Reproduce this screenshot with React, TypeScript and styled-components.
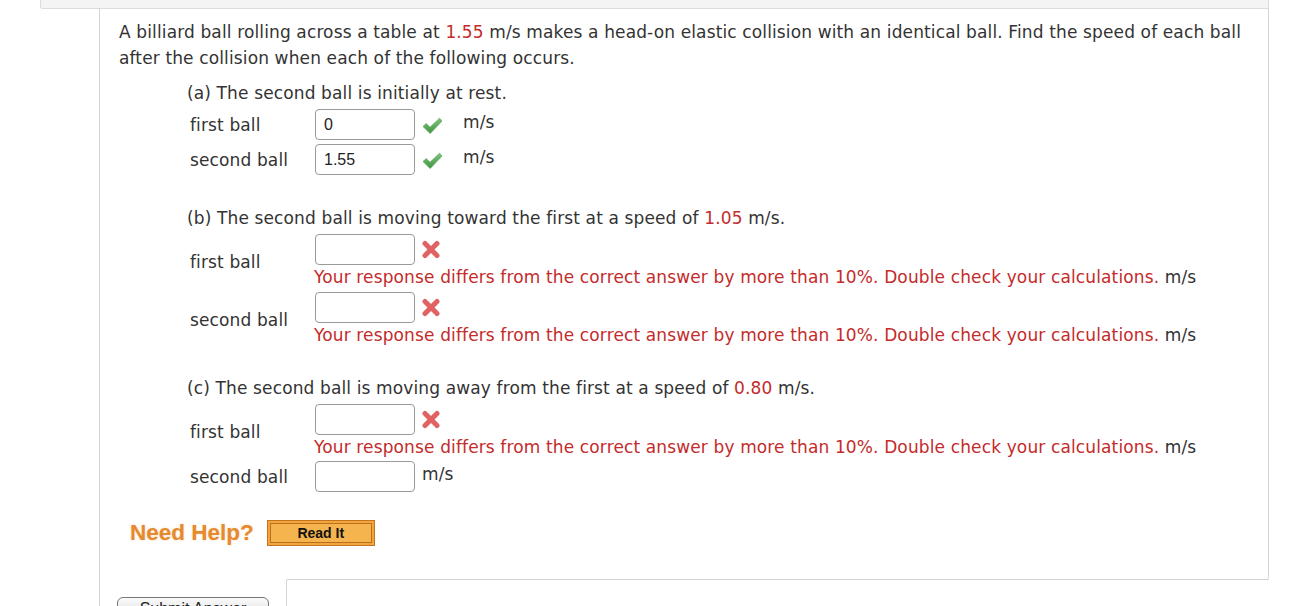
import React from "react";
import styled, { createGlobalStyle } from "styled-components";

const Global = createGlobalStyle`
  html, body { margin: 0; padding: 0; background: #fff; }
  body { font-family: "DejaVu Sans", Verdana, sans-serif; color: #333; overflow: hidden; }
`;

const Page = styled.div`
  margin-left: 40px;
  width: 1229px;
  height: 606px;
  overflow: hidden;
`;

const TopBar = styled.div`
  height: 9px;
  background: #f4f4f4;
  border: 1px solid #dcdcdc;
  border-top: none;
  border-bottom-left-radius: 3px;
  box-sizing: border-box;
`;

const Panel = styled.div`
  margin-left: 59px;
  display: flex;
  flex-direction: column;
`;

const Content = styled.div`
  border-left: 1px solid #d4d4d4;
  border-right: 1px solid #d4d4d4;
  border-bottom-right-radius: 4px;
  padding: 10px 20px 34px 19px;
  font-size: 17px;
  letter-spacing: 0.13px;
`;

const Para = styled.p`
  margin: 0;
  line-height: 26px;
`;

const Red = styled.span`
  color: #c42b2b;
`;

const Part = styled.div<{ $top: number }>`
  margin-top: ${(p) => p.$top}px;
  margin-left: 68px;
`;

const Heading = styled.div`
  line-height: 24px;
`;

const Grid = styled.div<{ $gap: number }>`
  margin-top: 4px;
  display: grid;
  grid-template-columns: 128px auto;
  row-gap: ${(p) => p.$gap}px;
  align-items: center;
`;

const Label = styled.div`
  padding-left: 3px;
  line-height: 24px;
`;

const Answer = styled.div`
  display: flex;
  flex-direction: column;
`;

const InputLine = styled.div`
  display: flex;
  align-items: center;
  height: 31px;
`;

const Input = styled.div`
  width: 100px;
  height: 31px;
  box-sizing: border-box;
  border: 1px solid #9a9a9a;
  border-radius: 4px;
  padding: 0 8px;
  display: flex;
  align-items: center;
  font-family: "Liberation Sans", Arial, sans-serif;
  font-size: 16px;
  letter-spacing: 0;
  color: #222;
  background: #fff;
`;

const Icon = styled.svg`
  margin-left: 6px;
  flex: none;
`;

const Unit = styled.span<{ $gap: number }>`
  margin-left: ${(p) => p.$gap}px;
  position: relative;
  top: -3px;
`;

const ErrorLine = styled.div`
  line-height: 24px;
  margin-left: -1px;
  white-space: nowrap;
`;

const HelpRow = styled.div`
  margin-top: 28px;
  margin-left: 11px;
  display: flex;
  align-items: center;
  gap: 13px;
`;

const NeedHelp = styled.span`
  font-family: "Liberation Sans", Arial, sans-serif;
  font-weight: bold;
  font-size: 22.5px;
  letter-spacing: 0;
  color: #e58a2e;
  text-shadow: 0 0 2px rgba(240, 170, 90, 0.5);
`;

const ReadIt = styled.button`
  width: 108px;
  height: 26px;
  box-sizing: border-box;
  border: 1px solid #c27420;
  background: #f5b44e;
  box-shadow: inset 0 0 0 2px #f3a53c, inset 0 0 0 3px #b8701f;
  font-family: "Liberation Sans", Arial, sans-serif;
  font-weight: bold;
  font-size: 14px;
  color: #111;
  padding: 0;
  cursor: pointer;
`;

const Footer = styled.div`
  display: flex;
`;

const FooterLeft = styled.div`
  width: 187px;
  flex: none;
  border-left: 1px solid #d4d4d4;
  padding: 17px 0 0 17px;
  height: 40px;
  box-sizing: border-box;
`;

const FooterRight = styled.div`
  flex: 1;
  border-top: 1px solid #d4d4d4;
  border-left: 1px solid #d4d4d4;
  border-top-left-radius: 2px;
  margin-top: -1px;
  height: 40px;
`;

const Submit = styled.button`
  width: 152px;
  height: 22px;
  box-sizing: border-box;
  border: 1px solid #777;
  border-radius: 6px;
  background: linear-gradient(#fafafa, #dcdcdc);
  font-family: "Liberation Sans", Arial, sans-serif;
  font-size: 16px;
  line-height: 18px;
  color: #222;
  padding: 1px 0 0;
  display: block;
`;

const Check = () => (
  <Icon width="21" height="18" viewBox="0 0 21 18" style={{ marginLeft: 7, marginTop: 3 }}>
    <defs>
      <linearGradient id="cg" x1="0" y1="0" x2="0" y2="1">
        <stop offset="0" stopColor="#7cc47a" />
        <stop offset="1" stopColor="#3f9640" />
      </linearGradient>
    </defs>
    <path d="M1 9.5 L4.2 6.6 L8 10.2 L17.6 1.2 L20 4 L8.2 16.6 Z" fill="url(#cg)" stroke="#4e9a4c" strokeWidth="0.6" strokeLinejoin="round" />
  </Icon>
);

const Cross = () => (
  <Icon width="20" height="19" viewBox="0 0 20 19" style={{ marginLeft: 6 }}>
    <g stroke="#e16262" strokeWidth="5" strokeLinecap="round">
      <line x1="4" y1="3.5" x2="16" y2="15.5" />
      <line x1="16" y1="3.5" x2="4" y2="15.5" />
    </g>
  </Icon>
);

const ERR = "Your response differs from the correct answer by more than 10%. Double check your calculations.";

type RowProps = { label: string; value?: string; status: "ok" | "bad" | "none" };

const Row = ({ label, value, status }: RowProps) => (
  <>
    <Label>{label}</Label>
    <Answer>
      <InputLine>
        <Input>{value}</Input>
        {status === "ok" && (
          <>
            <Check />
            <Unit $gap={20}>m/s</Unit>
          </>
        )}
        {status === "bad" && <Cross />}
        {status === "none" && <Unit $gap={7}>m/s</Unit>}
      </InputLine>
      {status === "bad" && (
        <ErrorLine>
          <Red>{ERR}</Red> m/s
        </ErrorLine>
      )}
    </Answer>
  </>
);

export default function App() {
  return (
    <>
      <Global />
      <Page>
        <TopBar />
        <Panel>
          <Content>
            <Para>
              A billiard ball rolling across a table at <Red>1.55</Red> m/s makes a head-on elastic collision with an
              identical ball. Find the speed of each ball after the collision when each of the following occurs.
            </Para>
            <Part $top={10}>
              <Heading>(a) The second ball is initially at rest.</Heading>
              <Grid $gap={4}>
                <Row label="first ball" value="0" status="ok" />
                <Row label="second ball" value="1.55" status="ok" />
              </Grid>
            </Part>
            <Part $top={31}>
              <Heading>
                (b) The second ball is moving toward the first at a speed of <Red>1.05</Red> m/s.
              </Heading>
              <Grid $gap={3}>
                <Row label="first ball" status="bad" />
                <Row label="second ball" status="bad" />
              </Grid>
            </Part>
            <Part $top={29}>
              <Heading>
                (c) The second ball is moving away from the first at a speed of <Red>0.80</Red> m/s.
              </Heading>
              <Grid $gap={2}>
                <Row label="first ball" status="bad" />
                <Row label="second ball" status="none" />
              </Grid>
            </Part>
            <HelpRow>
              <NeedHelp>Need Help?</NeedHelp>
              <ReadIt>Read It</ReadIt>
            </HelpRow>
          </Content>
          <Footer>
            <FooterLeft>
              <Submit>Submit Answer</Submit>
            </FooterLeft>
            <FooterRight />
          </Footer>
        </Panel>
      </Page>
    </>
  );
}
